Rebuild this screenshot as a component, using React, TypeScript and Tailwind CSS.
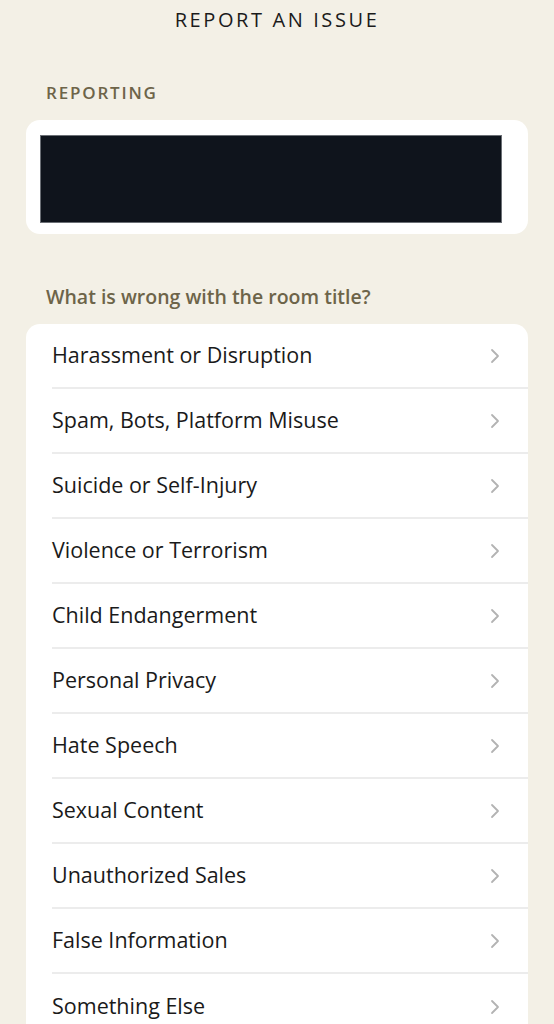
import React from 'react';

const reasons = [
  'Harassment or Disruption',
  'Spam, Bots, Platform Misuse',
  'Suicide or Self-Injury',
  'Violence or Terrorism',
  'Child Endangerment',
  'Personal Privacy',
  'Hate Speech',
  'Sexual Content',
  'Unauthorized Sales',
  'False Information',
  'Something Else',
];

function Chevron() {
  return (
    <svg width="10" height="16" viewBox="0 0 10 16" fill="none" className="shrink-0">
      <path d="M2 2l6 6-6 6" stroke="#b3b3b3" strokeWidth="1.8" strokeLinecap="round" strokeLinejoin="round" />
    </svg>
  );
}

export default function App() {
  return (
    <div className="min-h-[1024px] w-[554px] bg-[#f3f0e6] font-['Open_Sans',sans-serif] overflow-hidden">
      {/* Header */}
      <h1 className="pt-[7px] text-center text-[20px] leading-[26px] tracking-[2.6px] text-[#1b1b1b]">REPORT AN ISSUE</h1>

      {/* Reporting */}
      <p className="mt-[50px] ml-[46px] text-[17px] leading-[20px] font-semibold tracking-[1.8px] text-[#6d6449]">REPORTING</p>
      <div className="mt-[17px] mx-[26px] rounded-[14px] bg-white pt-[15px] pb-[11px] pl-[14px] pr-[26px]">
        <div className="h-[88px] bg-[#0f141c] border border-[#6b6f75]" />
      </div>

      {/* Question */}
      <p className="mt-[51px] ml-[46px] text-[19.5px] leading-[24px] font-semibold text-[#6d6449]">What is wrong with the room title?</p>

      {/* Reasons */}
      <div className="mt-[15px] ml-[26px] mr-[26px] rounded-t-[14px] bg-white">
        {reasons.map((r, i) => (
          <div key={r} className="pl-[26px]">
            <div className={`flex h-[65px] items-center justify-between pr-[28px] ${i < reasons.length - 1 ? 'border-b-2 border-[#ececec]' : ''}`}>
              <span className="text-[21.5px] text-[#1a1a1a]">{r}</span>
              <Chevron />
            </div>
          </div>
        ))}
      </div>
    </div>
  );
}
